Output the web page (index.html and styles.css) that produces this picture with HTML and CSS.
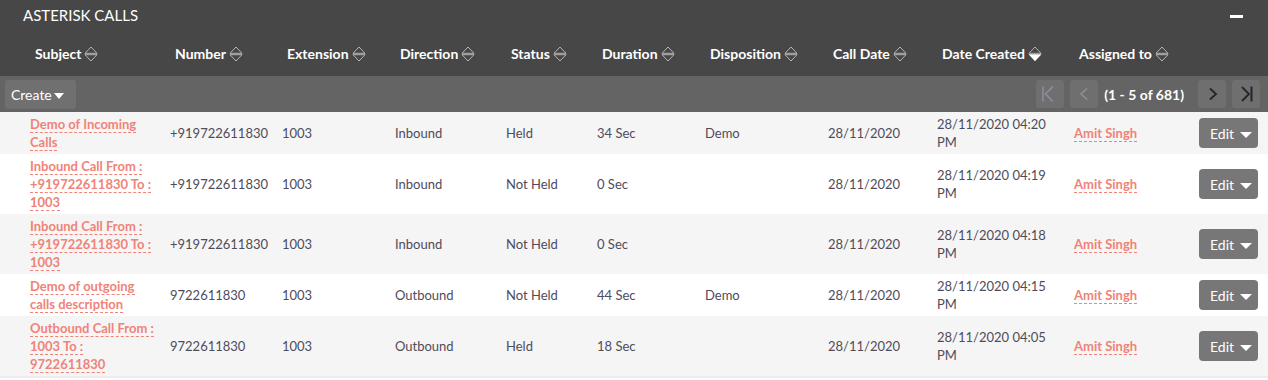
FILE: index.html
```html
<!DOCTYPE html>
<html>
<head>
<meta charset="utf-8">
<link rel="stylesheet" href="styles.css">
</head>
<body>
<div class="panel">
  <div class="title-bar">
    <span class="title">ASTERISK CALLS</span>
    <span class="minimize"></span>
  </div>
  <table class="grid">
    <colgroup>
      <col class="c-check"><col class="c-subject"><col class="c-number"><col class="c-ext"><col class="c-dir"><col class="c-status"><col class="c-dur"><col class="c-disp"><col class="c-calldate"><col class="c-created"><col class="c-assigned"><col class="c-edit">
    </colgroup>
    <thead>
      <tr class="head-row">
        <th></th>
        <th>Subject<svg class="sort" viewBox="0 0 14 16"><path d="M1 7.3 L7 1 L13 7.3 Z" fill="none" stroke="#b4b4b4"/><path d="M1 8.7 L13 8.7 L7 15 Z" fill="none" stroke="#b4b4b4"/></svg></th>
        <th>Number<svg class="sort" viewBox="0 0 14 16"><path d="M1 7.3 L7 1 L13 7.3 Z" fill="none" stroke="#b4b4b4"/><path d="M1 8.7 L13 8.7 L7 15 Z" fill="none" stroke="#b4b4b4"/></svg></th>
        <th>Extension<svg class="sort" viewBox="0 0 14 16"><path d="M1 7.3 L7 1 L13 7.3 Z" fill="none" stroke="#b4b4b4"/><path d="M1 8.7 L13 8.7 L7 15 Z" fill="none" stroke="#b4b4b4"/></svg></th>
        <th>Direction<svg class="sort" viewBox="0 0 14 16"><path d="M1 7.3 L7 1 L13 7.3 Z" fill="none" stroke="#b4b4b4"/><path d="M1 8.7 L13 8.7 L7 15 Z" fill="none" stroke="#b4b4b4"/></svg></th>
        <th>Status<svg class="sort" viewBox="0 0 14 16"><path d="M1 7.3 L7 1 L13 7.3 Z" fill="none" stroke="#b4b4b4"/><path d="M1 8.7 L13 8.7 L7 15 Z" fill="none" stroke="#b4b4b4"/></svg></th>
        <th>Duration<svg class="sort" viewBox="0 0 14 16"><path d="M1 7.3 L7 1 L13 7.3 Z" fill="none" stroke="#b4b4b4"/><path d="M1 8.7 L13 8.7 L7 15 Z" fill="none" stroke="#b4b4b4"/></svg></th>
        <th>Disposition<svg class="sort" viewBox="0 0 14 16"><path d="M1 7.3 L7 1 L13 7.3 Z" fill="none" stroke="#b4b4b4"/><path d="M1 8.7 L13 8.7 L7 15 Z" fill="none" stroke="#b4b4b4"/></svg></th>
        <th>Call Date<svg class="sort" viewBox="0 0 14 16"><path d="M1 7.3 L7 1 L13 7.3 Z" fill="none" stroke="#b4b4b4"/><path d="M1 8.7 L13 8.7 L7 15 Z" fill="none" stroke="#b4b4b4"/></svg></th>
        <th>Date Created<svg class="sort" viewBox="0 0 14 16"><path d="M1 7.3 L7 1 L13 7.3 Z" fill="none" stroke="#b4b4b4"/><path d="M0.5 8.3 L13.5 8.3 L7 15.3 Z" fill="#ffffff"/></svg></th>
        <th>Assigned to<svg class="sort" viewBox="0 0 14 16"><path d="M1 7.3 L7 1 L13 7.3 Z" fill="none" stroke="#b4b4b4"/><path d="M1 8.7 L13 8.7 L7 15 Z" fill="none" stroke="#b4b4b4"/></svg></th>
        <th></th>
      </tr>
      <tr class="tool-row">
        <td colspan="12">
          <div class="toolbar">
            <button class="create">Create<span class="caret"></span></button>
            <div class="pager">
              <span class="pg-btn"><svg viewBox="0 0 28 28"><path d="M7 6.5 V21.5" stroke="#8e8e9c" stroke-width="1.6" fill="none"/><path d="M17 6.5 L9.5 14 L17 21.5" stroke="#8e8e9c" stroke-width="1.6" fill="none"/></svg></span>
              <span class="pg-btn"><svg viewBox="0 0 28 28"><path d="M17 8.5 L11 14 L17 19.5" stroke="#8e8e9c" stroke-width="1.6" fill="none"/></svg></span>
              <span class="pg-text">(1 - 5 of 681)</span>
              <span class="pg-btn"><svg viewBox="0 0 28 28"><path d="M12 8.5 L18 14 L12 19.5" stroke="#23232e" stroke-width="1.8" fill="none"/></svg></span>
              <span class="pg-btn"><svg viewBox="0 0 28 28"><path d="M10 7 L17 14 L10 21" stroke="#23232e" stroke-width="1.8" fill="none"/><path d="M19.5 6.5 V21.5" stroke="#23232e" stroke-width="2" fill="none"/></svg></span>
            </div>
          </div>
        </td>
      </tr>
    </thead>
    <tbody>
      <tr>
        <td></td>
        <td><a class="link">Demo of Incoming Calls</a></td>
        <td>+919722611830</td>
        <td>1003</td>
        <td>Inbound</td>
        <td>Held</td>
        <td>34 Sec</td>
        <td>Demo</td>
        <td>28/11/2020</td>
        <td>28/11/2020 04:20 PM</td>
        <td><a class="link">Amit Singh</a></td>
        <td><button class="edit">Edit<span class="caret"></span></button></td>
      </tr>
      <tr>
        <td></td>
        <td><a class="link">Inbound Call From : +919722611830 To : 1003</a></td>
        <td>+919722611830</td>
        <td>1003</td>
        <td>Inbound</td>
        <td>Not Held</td>
        <td>0 Sec</td>
        <td></td>
        <td>28/11/2020</td>
        <td>28/11/2020 04:19 PM</td>
        <td><a class="link">Amit Singh</a></td>
        <td><button class="edit">Edit<span class="caret"></span></button></td>
      </tr>
      <tr>
        <td></td>
        <td><a class="link">Inbound Call From : +919722611830 To : 1003</a></td>
        <td>+919722611830</td>
        <td>1003</td>
        <td>Inbound</td>
        <td>Not Held</td>
        <td>0 Sec</td>
        <td></td>
        <td>28/11/2020</td>
        <td>28/11/2020 04:18 PM</td>
        <td><a class="link">Amit Singh</a></td>
        <td><button class="edit">Edit<span class="caret"></span></button></td>
      </tr>
      <tr>
        <td></td>
        <td><a class="link">Demo of outgoing calls description</a></td>
        <td>9722611830</td>
        <td>1003</td>
        <td>Outbound</td>
        <td>Not Held</td>
        <td>44 Sec</td>
        <td>Demo</td>
        <td>28/11/2020</td>
        <td>28/11/2020 04:15 PM</td>
        <td><a class="link">Amit Singh</a></td>
        <td><button class="edit">Edit<span class="caret"></span></button></td>
      </tr>
      <tr>
        <td></td>
        <td><a class="link">Outbound Call From : 1003 To : 9722611830</a></td>
        <td>9722611830</td>
        <td>1003</td>
        <td>Outbound</td>
        <td>Held</td>
        <td>18 Sec</td>
        <td></td>
        <td>28/11/2020</td>
        <td>28/11/2020 04:05 PM</td>
        <td><a class="link">Amit Singh</a></td>
        <td><button class="edit">Edit<span class="caret"></span></button></td>
      </tr>
    </tbody>
  </table>
</div>
</body>
</html>
```

FILE: styles.css
```css
* { box-sizing: border-box; }
html, body { margin: 0; padding: 0; background: #ffffff; }
body { font-family: Lato, "Open Sans", "Liberation Sans", sans-serif; font-size: 13px; color: #4f4c5a; }

.panel { width: 1268px; }

.title-bar {
  height: 31px;
  background: #474747;
  display: flex;
  align-items: center;
  justify-content: space-between;
  padding: 0 25px 1px 23px;
}
.title { color: #ffffff; font-size: 15px; }
.minimize { width: 13px; height: 3px; background: #ffffff; margin-top: 2px; }

.grid { width: 1268px; border-collapse: collapse; table-layout: fixed; }
.c-check { width: 25px; }
.c-subject { width: 140px; }
.c-number { width: 112px; }
.c-ext { width: 113px; }
.c-dir { width: 111px; }
.c-status { width: 91px; }
.c-dur { width: 108px; }
.c-disp { width: 123px; }
.c-calldate { width: 109px; }
.c-created { width: 137px; }
.c-assigned { width: 125px; }
.c-edit { width: 74px; }

.head-row th {
  background: #474747;
  color: #ffffff;
  font-weight: bold;
  font-size: 14px;
  text-align: left;
  height: 45px;
  padding: 0 0 0 10px;
  white-space: nowrap;
  vertical-align: middle;
}
.sort { width: 14px; height: 16px; margin-left: 3px; vertical-align: -3px; }

.tool-row td { background: #646464; padding: 0; height: 36px; }
.toolbar { display: flex; align-items: center; justify-content: space-between; padding: 0 8px 0 5px; height: 36px; }
.create {
  font-family: inherit;
  font-size: 14px;
  color: #ffffff;
  background: #707070;
  border: none;
  border-radius: 3px;
  height: 29px;
  width: 71px;
  padding: 0 0 0 6px;
  text-align: left;
  display: flex;
  align-items: center;
}
.caret {
  display: inline-block;
  width: 0; height: 0;
  border-left: 5.5px solid transparent;
  border-right: 5.5px solid transparent;
  border-top: 6px solid #ffffff;
  margin-left: 2px;
  margin-top: 4px;
}
.pager { display: flex; align-items: center; gap: 6px; }
.pg-btn { width: 28px; height: 28px; background: #6f6f6f; border-radius: 3px; display: block; }
.pg-btn svg { width: 28px; height: 28px; display: block; }
.pg-text { color: #ffffff; font-weight: bold; font-size: 14px; margin-right: 8px; }

tbody tr:nth-child(odd) td { background: #f5f5f5; }
tbody tr:nth-child(even) td { background: #ffffff; }
tbody tr:last-child td { border-bottom: 2px solid #ececec; }
tbody td {
  padding: 3px 5px;
  line-height: 18px;
  vertical-align: middle;
  font-size: 13px;
}
.link {
  color: #f08377;
  font-weight: bold;
  border-bottom: 1px dashed #f08377;
  text-decoration: none;
}
.edit {
  font-family: inherit;
  font-size: 14px;
  color: #ffffff;
  background: #777777;
  border: none;
  border-radius: 4px;
  width: 59px;
  height: 30px;
  padding: 0 0 0 11px;
  display: flex;
  align-items: center;
}
.edit .caret { margin-left: 6px; margin-top: 3px; border-left-width: 6px; border-right-width: 6px; }
```
